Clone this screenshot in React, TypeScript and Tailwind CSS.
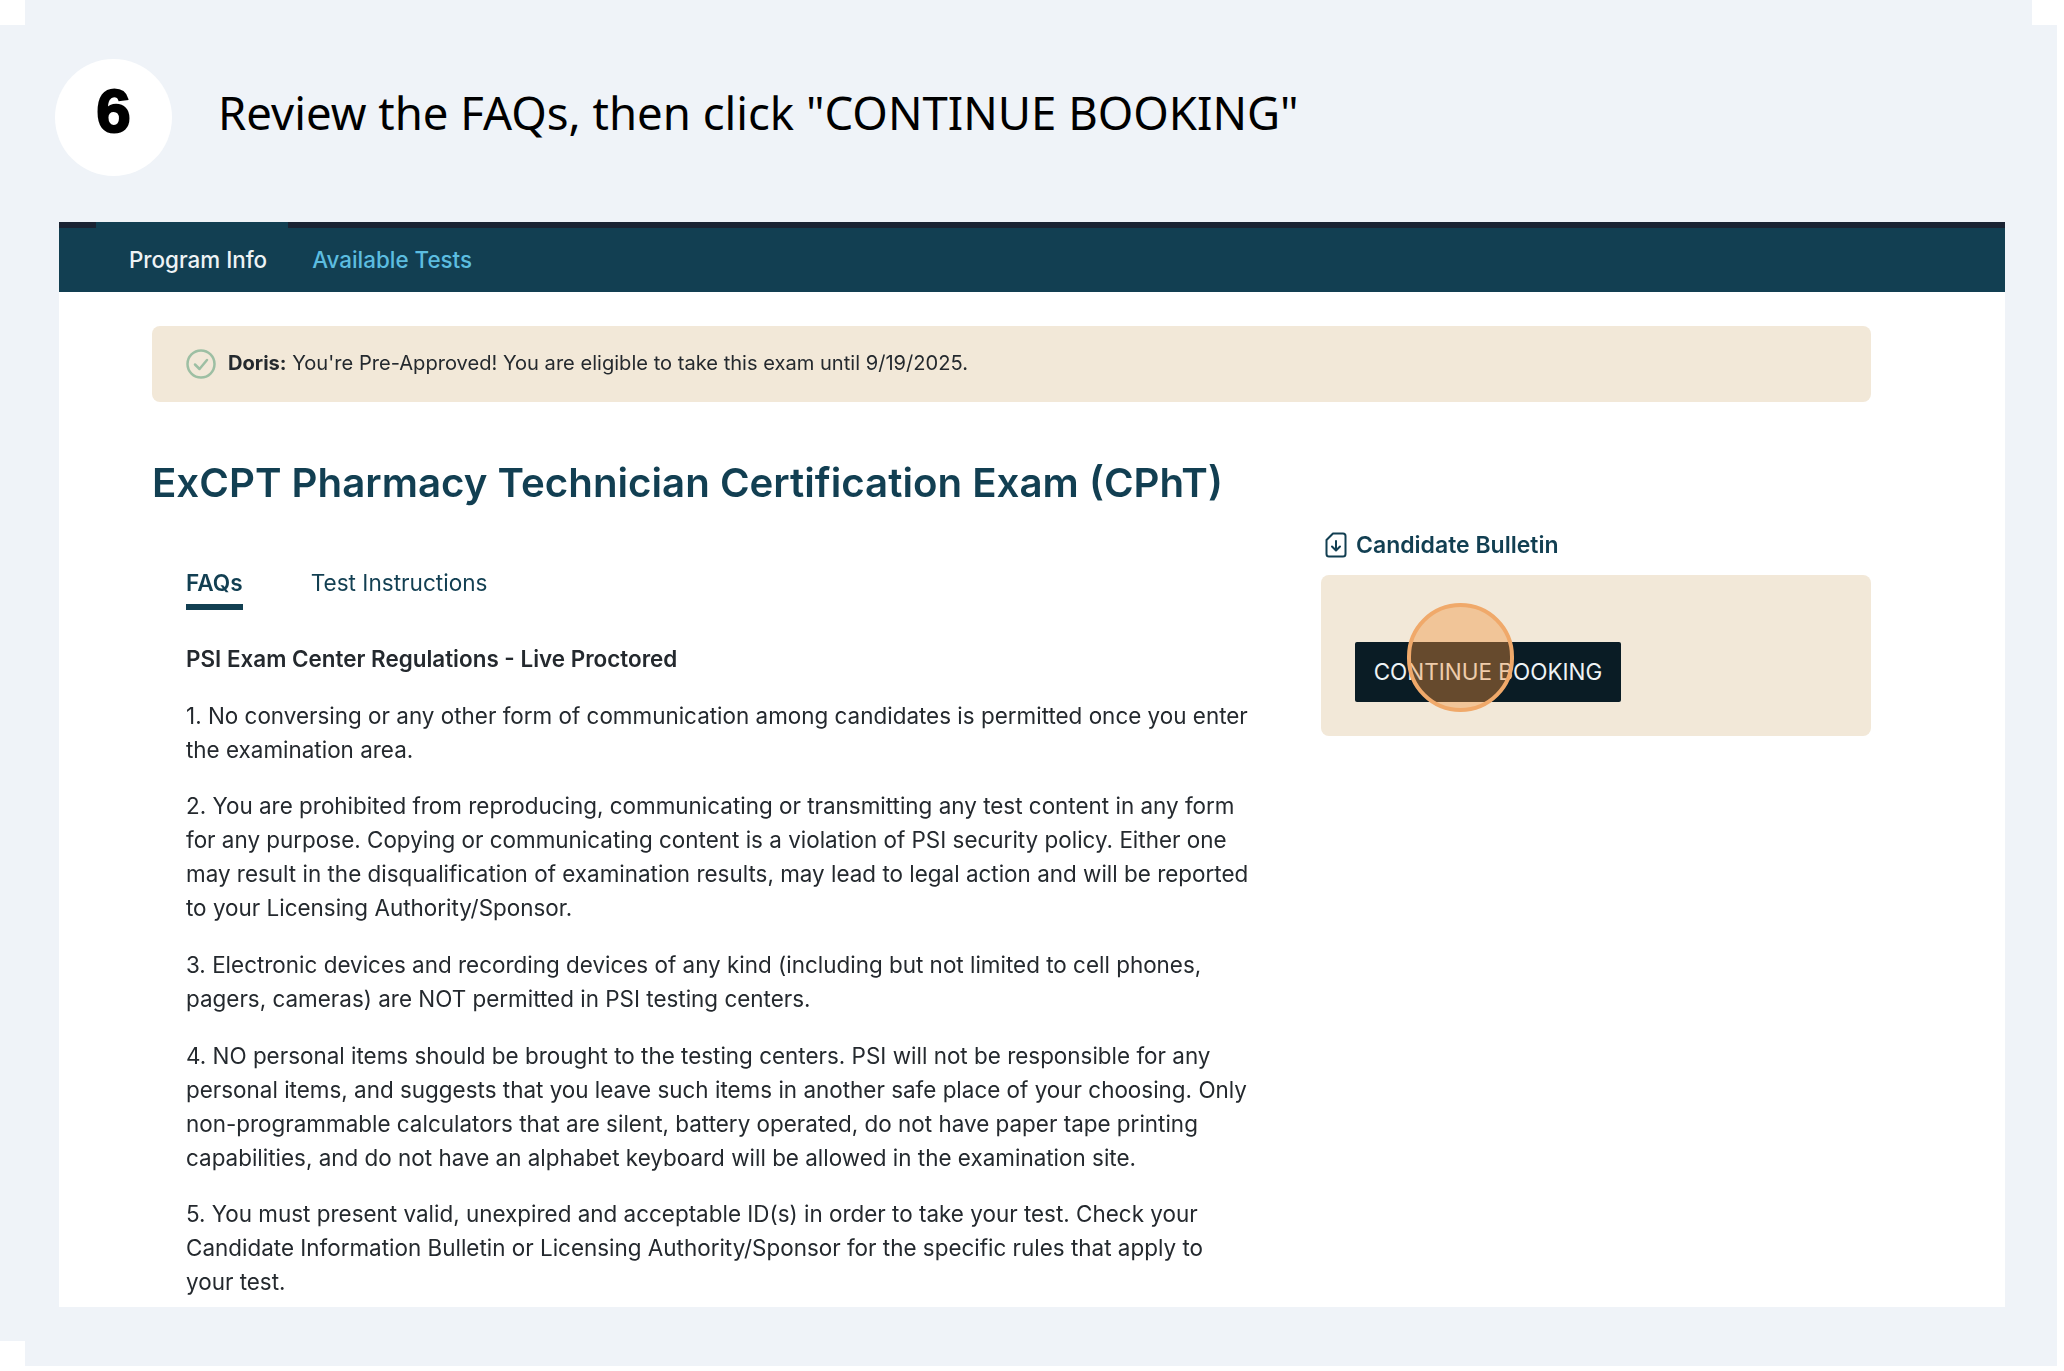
const paragraphs = [
  [
    "1. No conversing or any other form of communication among candidates is permitted once you enter",
    "the examination area.",
  ],
  [
    "2. You are prohibited from reproducing, communicating or transmitting any test content in any form",
    "for any purpose. Copying or communicating content is a violation of PSI security policy. Either one",
    "may result in the disqualification of examination results, may lead to legal action and will be reported",
    "to your Licensing Authority/Sponsor.",
  ],
  [
    "3. Electronic devices and recording devices of any kind (including but not limited to cell phones,",
    "pagers, cameras) are NOT permitted in PSI testing centers.",
  ],
  [
    "4. NO personal items should be brought to the testing centers. PSI will not be responsible for any",
    "personal items, and suggests that you leave such items in another safe place of your choosing. Only",
    "non-programmable calculators that are silent, battery operated, do not have paper tape printing",
    "capabilities, and do not have an alphabet keyboard will be allowed in the examination site.",
  ],
  [
    "5. You must present valid, unexpired and acceptable ID(s) in order to take your test. Check your",
    "Candidate Information Bulletin or Licensing Authority/Sponsor for the specific rules that apply to",
    "your test.",
  ],
]

const CheckIcon = () => (
  <svg width="30" height="30" viewBox="0 0 30 30" fill="none" className="shrink-0">
    <circle cx="15" cy="15" r="13.5" stroke="#9dbfa3" strokeWidth="2.5" />
    <path d="M9 15.5l4.5 4.5L21 11" stroke="#9dbfa3" strokeWidth="2.5" strokeLinecap="round" strokeLinejoin="round" />
  </svg>
)

const BulletinIcon = () => (
  <svg width="22" height="26" viewBox="0 0 22 26" fill="none" className="shrink-0">
    <path
      d="M8 1.5h10a2.5 2.5 0 0 1 2.5 2.5v18a2.5 2.5 0 0 1-2.5 2.5H4A2.5 2.5 0 0 1 1.5 22V8z"
      stroke="#123f52"
      strokeWidth="2"
      strokeLinejoin="round"
    />
    <path d="M11 9v9M7 14.5l4 4 4-4" stroke="#123f52" strokeWidth="2" strokeLinecap="round" strokeLinejoin="round" />
  </svg>
)

const App = () => {
  return (
    <div className="w-[2064px] h-[1371px] bg-white overflow-hidden font-['Inter',sans-serif]">
      <div className="relative w-[2057px] h-[1366px] bg-[#eff3f8] overflow-hidden">
        <div className="absolute left-0 top-0 w-[25px] h-[25px] bg-white" />
        <div className="absolute right-0 top-0 w-[25px] h-[25px] bg-white" />
        <div className="absolute left-0 bottom-0 w-[25px] h-[25px] bg-white" />

        <div className="flex items-center pt-[59px] pl-[55px]">
          <div className="flex items-center justify-center w-[117px] h-[117px] rounded-full bg-white">
            <span className="text-[62px] leading-none font-bold text-black font-['Liberation_Sans',sans-serif] -translate-y-[7px] [-webkit-text-stroke:2px_black]">
              6
            </span>
          </div>
          <h1 className="ml-[46px] -mt-[9px] text-[45.5px] leading-none text-black whitespace-nowrap font-['Noto_Sans',sans-serif]">
            Review the FAQs, then click "CONTINUE BOOKING"
          </h1>
        </div>

        <div className="ml-[59px] mt-[46px] w-[1946px] h-[1085px] bg-white overflow-hidden">
          <div className="blur-[0.4px]">
            <div className="relative h-[70px] bg-[#123f52]">
              <div className="flex h-[6px]">
                <div className="w-[37px] bg-[#1a2333]" />
                <div className="w-[192px]" />
                <div className="flex-1 bg-[#1a2333]" />
              </div>
              <div className="flex items-center h-[64px] pl-[70px] gap-[45px] text-[22.4px] font-medium">
                <span className="text-[#eef3f5]">Program Info</span>
                <span className="text-[#5cbde0]">Available Tests</span>
              </div>
            </div>

            <div className="pl-[93px] pr-[134px] pt-[34px]">
              <div className="flex items-center h-[76px] pl-[34px] gap-[12px] rounded-[8px] bg-[#f2e8d8] text-[20.1px] text-[#24292e]">
                <CheckIcon />
                <p className="-mt-[1px]">
                  <span className="font-bold">Doris:</span> You're Pre-Approved! You are eligible to take this exam until 9/19/2025.
                </p>
              </div>

              <h2 className="mt-[56px] text-[40.25px] leading-[50px] font-semibold text-[#123f52] whitespace-nowrap">
                ExCPT Pharmacy Technician Certification Exam (CPhT)
              </h2>

              <div className="flex justify-between">
                <div className="pl-[34px] pt-[58px]">
                  <div className="flex gap-[68px] text-[22.6px] text-[#123f52]">
                    <div className="font-semibold pb-[4px] border-b-[6px] border-[#123f52]">FAQs</div>
                    <div>Test Instructions</div>
                  </div>
                  <p className="mt-[32px] text-[22.45px] leading-[34px] font-semibold text-[#24292e]">
                    PSI Exam Center Regulations - Live Proctored
                  </p>
                  {paragraphs.map((lines, i) => (
                    <p key={i} className="mt-[22.7px] text-[22.45px] leading-[34px] text-[#24292e] whitespace-nowrap">
                      {lines.map((line, j) => (
                        <span key={j} className="block">
                          {line}
                        </span>
                      ))}
                    </p>
                  ))}
                </div>

                <div className="w-[550px] pt-[21px]">
                  <div className="flex items-center gap-[9px] pl-[4px] h-[32px] text-[23px] font-semibold text-[#123f52]">
                    <BulletinIcon />
                    <span>Candidate Bulletin</span>
                  </div>
                  <div className="relative mt-[14px] h-[161px] rounded-[8px] bg-[#f2e8d8] pt-[67px] pl-[34px]">
                    <button className="flex items-center justify-center w-[266px] h-[60px] rounded-[2px] bg-[#0a1c25] text-[22.5px] text-[#eef3f5]">
                      CONTINUE BOOKING
                    </button>
                    <div className="absolute left-[86px] top-[28px] w-[107px] h-[109px] rounded-full bg-[#f0913a]/40 border-[4px] border-[#f0a96a]" />
                  </div>
                </div>
              </div>
            </div>
          </div>
        </div>
      </div>
    </div>
  )
}

export default App
